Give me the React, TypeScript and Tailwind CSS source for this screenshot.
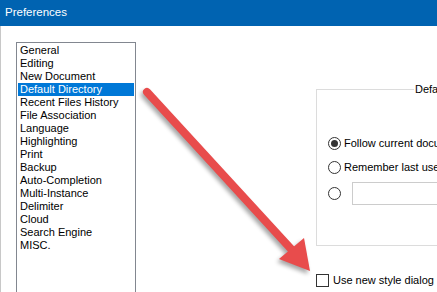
import React from "react";

const items = [
  "General",
  "Editing",
  "New Document",
  "Default Directory",
  "Recent Files History",
  "File Association",
  "Language",
  "Highlighting",
  "Print",
  "Backup",
  "Auto-Completion",
  "Multi-Instance",
  "Delimiter",
  "Cloud",
  "Search Engine",
  "MISC.",
];

function Radio({ checked }: { checked?: boolean }) {
  return (
    <span className="relative flex h-[13px] w-[13px] shrink-0 items-center justify-center rounded-full border border-[#333333] bg-white">
      {checked && <span className="h-[7px] w-[7px] rounded-full bg-[#333333]" />}
    </span>
  );
}

export default function App() {
  return (
    <div
      className="relative h-[292px] w-[437px] overflow-hidden bg-white text-[11px] text-black"
      style={{ fontFamily: '"Liberation Sans", Arial, sans-serif' }}
    >
      <div className="flex h-[26px] items-center bg-[#0063b1] pl-[5px] text-[11.5px] text-white">
        Preferences
      </div>
      <div className="flex h-[266px] overflow-hidden border-l border-[#c8c8c8]">
        <div className="ml-[15px] mt-[16px] h-[260px] w-[120px] shrink-0 border border-[#828790] bg-white p-[1px]">
          {items.map((it, i) => (
            <div
              key={it}
              className={
                "h-[13px] pl-[2px] leading-[13px] whitespace-nowrap " +
                (i === 3 ? "bg-[#0078d7] text-white" : "")
              }
            >
              {it}
            </div>
          ))}
        </div>
        <div className="ml-[180px] flex shrink-0 flex-col">
          <div className="mt-[63px] h-[157px] w-[200px] border border-[#dcdcdc] border-r-0">
            <div className="relative">
              <span className="absolute left-[97px] top-[-8px] bg-white pl-[1px] leading-[14px] whitespace-nowrap">
                Default Directory
              </span>
            </div>
            <div className="ml-[11px] mt-[46px] flex flex-col">
              <div className="flex h-[14px] items-center gap-[3px]">
                <Radio checked />
                <span className="whitespace-nowrap">Follow current document</span>
              </div>
              <div className="mt-[10px] flex h-[14px] items-center gap-[3px]">
                <Radio />
                <span className="whitespace-nowrap">Remember last used</span>
              </div>
              <div className="mt-[8px] flex items-center">
                <Radio />
                <div className="ml-[11px] h-[23px] w-[120px] border border-[#cccccc] border-r-0" />
              </div>
            </div>
          </div>
          <div className="mt-[27px] flex h-[14px] items-center gap-[4px]">
            <span className="h-[13px] w-[13px] shrink-0 border border-[#333333] bg-white" />
            <span className="whitespace-nowrap">Use new style dialog (</span>
          </div>
        </div>
      </div>
      <svg
        className="pointer-events-none absolute left-0 top-0"
        width="437"
        height="292"
        viewBox="0 0 437 292"
      >
        <defs>
          <filter id="sh" x="-20%" y="-20%" width="140%" height="140%">
            <feGaussianBlur stdDeviation="2" />
          </filter>
        </defs>
        <g transform="translate(-2,3)" filter="url(#sh)" opacity="0.35">
          <line x1="147" y1="92" x2="292" y2="250" stroke="#000" strokeWidth="8" strokeLinecap="round" />
          <polygon points="279,259 304,238 310,271" fill="#000" />
        </g>
        <line x1="147" y1="92" x2="292" y2="250" stroke="#e84c4c" strokeWidth="8" strokeLinecap="round" />
        <polygon points="279,259 304,238 310,271" fill="#e84c4c" />
      </svg>
    </div>
  );
}
